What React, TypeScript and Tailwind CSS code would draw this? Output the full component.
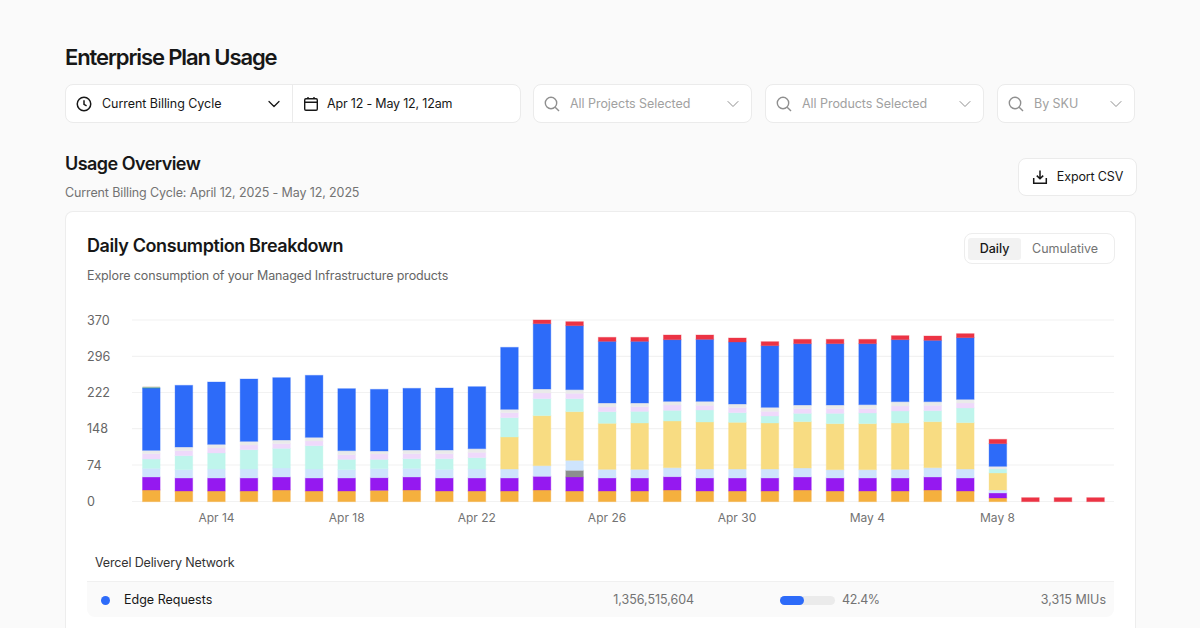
import { ChevronDown } from "lucide-react";

const COLORS = {
  orange: "#F5B03E",
  purple: "#9519F0",
  sky: "#CEE4FD",
  dark: "#8C8F8E",
  yellow: "#F8DC82",
  teal: "#BFF5EC",
  lilac: "#EFD9FB",
  gray: "#EAEAEA",
  blue: "#2D6BF9",
  red: "#EC3344",
};

type Key = keyof typeof COLORS;
// Each bar: segment tops measured from the reference, in 3x zoom units (baseline = 575).
const PLAIN: Key[] = ["orange", "purple", "sky", "teal", "lilac", "gray", "blue"];
const FULL: Key[] = ["orange", "purple", "sky", "yellow", "teal", "lilac", "gray", "blue", "red"];
const DARK: Key[] = ["orange", "purple", "dark", "sky", "yellow", "teal", "lilac", "gray", "blue", "red"];

const bars: { keys: Key[]; tops: number[] }[] = [
  { keys: PLAIN, tops: [540, 501, 475, 447, 431, 421, 234] },
  { keys: PLAIN, tops: [543, 504, 479, 437, 422, 411, 226] },
  { keys: PLAIN, tops: [543, 504, 477, 429, 414, 403, 216] },
  { keys: PLAIN, tops: [543, 504, 477, 419, 405, 394, 207] },
  { keys: PLAIN, tops: [540, 501, 474, 415, 401, 390, 203] },
  { keys: PLAIN, tops: [543, 504, 477, 407, 393, 382, 196] },
  { keys: PLAIN, tops: [543, 504, 479, 448, 434, 422, 236] },
  { keys: PLAIN, tops: [541, 503, 476, 448, 432, 423, 238] },
  { keys: PLAIN, tops: [540, 501, 475, 446, 431, 420, 235] },
  { keys: PLAIN, tops: [543, 504, 478, 446, 431, 420, 234] },
  { keys: PLAIN, tops: [543, 504, 477, 443, 427, 416, 230] },
  { keys: ["orange", "purple", "sky", "yellow", "teal", "lilac", "gray", "blue"], tops: [543, 504, 477, 381, 323, 308, 298, 112] },
  { keys: FULL, tops: [540, 499, 467, 317, 266, 249, 237, 41, 30] },
  { keys: DARK, tops: [543, 501, 481, 451, 305, 266, 250, 239, 47, 35] },
  { keys: FULL, tops: [543, 504, 478, 340, 305, 291, 279, 94, 82] },
  { keys: FULL, tops: [543, 504, 478, 339, 304, 290, 279, 94, 82] },
  { keys: FULL, tops: [540, 500, 473, 333, 301, 285, 274, 89, 75] },
  { keys: FULL, tops: [543, 504, 477, 336, 300, 286, 274, 88, 75] },
  { keys: FULL, tops: [543, 504, 477, 337, 308, 293, 282, 96, 84] },
  { keys: FULL, tops: [543, 504, 477, 339, 318, 304, 292, 107, 95] },
  { keys: FULL, tops: [540, 501, 474, 335, 310, 296, 285, 101, 88] },
  { keys: FULL, tops: [543, 504, 479, 341, 310, 296, 285, 101, 88] },
  { keys: FULL, tops: [543, 504, 479, 341, 309, 296, 284, 101, 88] },
  { keys: FULL, tops: [543, 504, 478, 339, 303, 288, 275, 89, 77] },
  { keys: FULL, tops: [540, 501, 473, 335, 302, 286, 275, 91, 78] },
  { keys: FULL, tops: [543, 504, 477, 338, 294, 279, 268, 83, 71] },
  { keys: ["orange", "purple", "sky", "yellow", "teal", "gray", "blue", "red"], tops: [564, 549, 540, 489, 477, 469, 401, 388] },
  { keys: ["red"], tops: [563] },
  { keys: ["red"], tops: [563] },
  { keys: ["red"], tops: [563] },
];

const CX = 65; // chart svg left edge on the page
const CY = 305; // chart svg top edge on the page
const toY = (z: number) => 310 + z / 3 - CY;

function Chart() {
  const grid = [320, 356.3, 392.5, 428.7, 465, 501.5];
  const yLabels = ["370", "296", "222", "148", "74", "0"];
  const xLabels: [string, number][] = [
    ["Apr 14", 216.5],
    ["Apr 18", 346.7],
    ["Apr 22", 476.8],
    ["Apr 26", 607],
    ["Apr 30", 737],
    ["May 4", 867.3],
    ["May 8", 997.5],
  ];
  return (
    <svg width={1071} height={232} viewBox="0 0 1071 232" className="block shrink-0">
      {grid.map((g) => (
        <line key={g} x1={132 - CX} x2={1114 - CX} y1={g - CY} y2={g - CY} stroke="#F2F2F2" strokeWidth={1.2} />
      ))}
      {yLabels.map((l, i) => (
        <text key={l} x={87 - CX} y={grid[i] - CY + 4.7} fontSize={12.6} fill="#666666">
          {l}
        </text>
      ))}
      {xLabels.map(([l, x]) => (
        <text key={l} x={x - CX} y={522 - CY} fontSize={12} fill="#737373" textAnchor="middle">
          {l}
        </text>
      ))}
      {bars.map((b, i) => {
        const x = 142 + i * 32.56 - CX;
        return (
          <g key={i}>
            {b.tops.map((t, j) => {
              const bottom = j === 0 ? 575 : b.tops[j - 1];
              const c = COLORS[b.keys[j]];
              return (
                <rect
                  key={j}
                  x={x + 0.5}
                  y={toY(t)}
                  width={17.6}
                  height={(bottom - t) / 3}
                  fill={c}
                  stroke={c}
                  strokeOpacity={0.35}
                  strokeWidth={1}
                />
              );
            })}
          </g>
        );
      })}
      <rect x={142.5 - CX} y={toY(232)} width={17.6} height={1} fill="#3F9C8C" />
      <rect x={142.5 - CX} y={toY(229.5)} width={17.6} height={0.8} fill="#D9CDB8" />
    </svg>
  );
}

function Clock() {
  return (
    <svg width="16" height="16" viewBox="0 0 16 16" fill="none" stroke="#171717" strokeWidth="1.5" className="shrink-0">
      <circle cx="8" cy="8" r="6.75" />
      <path d="M8 4.2V8.4L10.6 9.8" />
    </svg>
  );
}

function Cal() {
  return (
    <svg width="16" height="16" viewBox="0 0 16 16" fill="none" stroke="#171717" strokeWidth="1.4" className="shrink-0">
      <rect x="1.7" y="2.7" width="12.6" height="11.6" rx="1.2" />
      <path d="M1.7 6.3H14.3M5 1V2.7M11 1V2.7" />
    </svg>
  );
}

function ExportIcon() {
  return (
    <svg width="16" height="16" viewBox="0 0 16 16" fill="none" stroke="#171717" strokeWidth="1.5" className="shrink-0">
      <path d="M8 1.5V9.5M4.8 6.6L8 9.8L11.2 6.6" />
      <path d="M1.7 9V14.2H14.3V9" />
    </svg>
  );
}

function SearchGlyph() {
  return (
    <svg width="16" height="16" viewBox="0 0 16 16" fill="none" stroke="#8f8f8f" strokeWidth="1.4" className="shrink-0">
      <circle cx="7" cy="7" r="5.7" />
      <path d="M11.2 11.2L15 15" />
    </svg>
  );
}

function FilterSelect({ label, width }: { label: string; width: string }) {
  return (
    <div className={`flex h-[39px] items-center rounded-lg border border-[#ebebeb] bg-white pl-[10px] pr-[8px] ${width}`}>
      <SearchGlyph />
      <span className="ml-[10px] mt-[1px] text-[12.5px] tracking-[-0.004em] text-[#a1a1a1]">{label}</span>
      <ChevronDown size={20} strokeWidth={1.2} color="#8f8f8f" className="ml-auto shrink-0" />
    </div>
  );
}

export default function App() {
  return (
    <div
      className="h-[628px] w-[1200px] overflow-hidden bg-[#fafafa] pl-[65px] text-[#171717]"
      style={{ fontFamily: "Inter, 'Liberation Sans', sans-serif" }}
    >
      <h1 className="pt-[43px] text-[22px] leading-[28px] font-semibold tracking-[-0.05em] text-[#171717]">
        Enterprise Plan Usage
      </h1>

      <div className="mt-[13px] flex">
        <div className="flex h-[39px] w-[456px] rounded-lg border border-[#ebebeb] bg-white">
          <div className="flex w-[227px] items-center border-r border-[#ebebeb] pl-[10px] pr-[8px]">
            <Clock />
            <span className="ml-[10px] mt-[1px] text-[12.5px] tracking-[-0.004em] text-[#171717]">Current Billing Cycle</span>
            <ChevronDown size={20} strokeWidth={1.5} color="#171717" className="ml-auto shrink-0" />
          </div>
          <div className="flex flex-1 items-center pl-[10px]">
            <Cal />
            <span className="ml-[8px] mt-[1px] text-[12.5px] tracking-[-0.015em] text-[#171717]">Apr 12 - May 12, 12am</span>
          </div>
        </div>
        <FilterSelect label="All Projects Selected" width="ml-[12px] w-[219px]" />
        <FilterSelect label="All Products Selected" width="ml-[13px] w-[219px]" />
        <FilterSelect label="By SKU" width="ml-[13px] w-[138px]" />
      </div>

      <div className="mt-[35px] flex w-[1072px] items-start justify-between">
        <div>
          <h2 className="mt-[-6px] text-[18px] leading-[24px] font-semibold tracking-[-0.03em] text-[#171717]">
            Usage Overview
          </h2>
          <p className="mt-[7px] text-[12.5px] leading-[20px] tracking-[-0.01em] text-[#737373]">
            Current Billing Cycle: April 12, 2025 - May 12, 2025
          </p>
        </div>
        <button className="flex h-[38px] w-[119px] items-center justify-center gap-[9px] rounded-lg border border-[#ebebeb] bg-white text-[12.5px] tracking-[-0.012em] text-[#171717]">
          <ExportIcon />
          <span className="mt-[1px]">Export CSV</span>
        </button>
      </div>

      <div className="mt-[8px] w-[1071px] rounded-t-lg border border-b-0 border-[#ededed] bg-white pb-[24px]">
        <div className="flex items-start justify-between pl-[21px] pr-[20px] pt-[21px]">
          <div>
            <h3 className="text-[18px] leading-[26px] font-semibold tracking-[-0.022em] text-[#171717]">
              Daily Consumption Breakdown
            </h3>
            <p className="mt-[7px] text-[12.5px] leading-[20px] tracking-[-0.01em] text-[#666666]">
              Explore consumption of your Managed Infrastructure products
            </p>
          </div>
          <div className="flex h-[31px] w-[151px] items-center rounded-lg border border-[#ededed] px-[3px] text-[12.5px]">
            <span className="flex h-[22px] w-[53px] items-center justify-center rounded-[3px] bg-[#f2f2f2] pt-[1px] font-medium text-[#171717]">
              Daily
            </span>
            <span className="ml-[11px] mt-[1px] text-[#737373]">Cumulative</span>
          </div>
        </div>

        <div className="mt-[19px] -ml-px">
          <Chart />
        </div>

        <p className="ml-[29px] mt-[16px] text-[12.5px] leading-[20px] tracking-[-0.012em] text-[#333333]">Vercel Delivery Network</p>

        <div className="ml-[21px] mt-[8px] flex h-[36px] w-[1027px] items-center rounded-b-lg border-t border-[#f0f0f0] bg-[#fafafa] pr-[8px] pt-[1px] text-[12.5px]">
          <span className="ml-[14px] h-[9px] w-[9px] shrink-0 rounded-full bg-[#2D6BF9]" />
          <span className="ml-[14px] w-[400px] text-[#171717]">Edge Requests</span>
          <span className="w-[170px] text-right tracking-[-0.004em] text-[#737373]">1,356,515,604</span>
          <span className="ml-[86px] flex h-[9px] w-[55px] shrink-0 rounded-full bg-[#ebebeb]">
            <span className="h-[9px] w-[24px] rounded-full bg-[#2D6BF9]" />
          </span>
          <span className="ml-[7px] tracking-[-0.03em] text-[#737373]">42.4%</span>
          <span className="ml-auto text-[#737373]">3,315 MIUs</span>
        </div>
      </div>
    </div>
  );
}
